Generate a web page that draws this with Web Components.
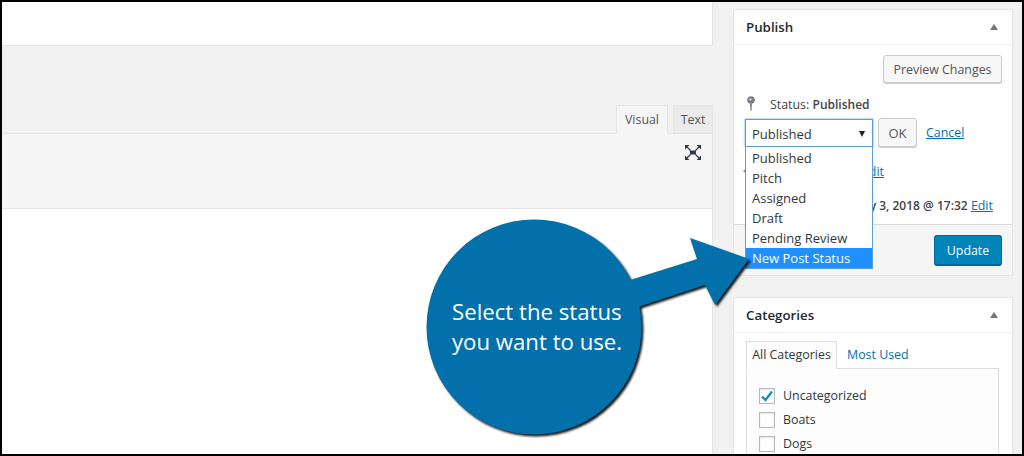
<!DOCTYPE html>
<html lang="en">
<head>
<meta charset="utf-8">
<title>Edit Post</title>
<style>
  html, body { margin: 0; padding: 0; background: #000; }
</style>
</head>
<body>
<wp-page>
  <wp-editor slot="main"></wp-editor>
  <wp-metabox slot="side" heading="Publish">
    <wp-publish></wp-publish>
  </wp-metabox>
  <wp-metabox slot="side" heading="Categories" tall>
    <wp-categories></wp-categories>
  </wp-metabox>
  <wp-callout slot="over">Select the status<br>you want to use.</wp-callout>
</wp-page>

<script>
class WpPage extends HTMLElement {
  connectedCallback() {
    this.attachShadow({ mode: 'open' });
    this.shadowRoot.innerHTML = `
      <style>
        :host {
          display: flex;
          position: relative;
          box-sizing: border-box;
          width: 1024px;
          height: 456px;
          border: 2px solid #000;
          background: #f1f1f1;
          overflow: hidden;
          font: 12.400px/18px "Open Sans", "Noto Sans", sans-serif;
          color: #444;
        }
        .main { width: 711px; flex: none; display: flex; }
        .side {
          margin-left: 20px;
          width: 280px;
          padding-top: 7px;
          display: flex;
          flex-direction: column;
          gap: 21px;
        }
      </style>
      <div class="main"><slot name="main"></slot></div>
      <div class="side"><slot name="side"></slot></div>
      <slot name="over"></slot>
    `;
  }
}
customElements.define('wp-page', WpPage);

class WpEditor extends HTMLElement {
  connectedCallback() {
    this.attachShadow({ mode: 'open' });
    this.shadowRoot.innerHTML = `
      <style>
        :host { display: flex; flex-direction: column; width: 100%; }
        .title {
          height: 43px;
          background: #fff;
          border: 1px solid #e5e5e5;
          border-width: 0 1px 1px 0;
        }
        .tabs {
          margin-top: 59px;
          height: 28px;
          display: flex;
          justify-content: flex-end;
          align-items: flex-end;
          gap: 5px;
          position: relative;
          z-index: 1;
        }
        .tab {
          box-sizing: border-box;
          height: 29px;
          margin-bottom: -1px;
          border: 1px solid #e5e5e5;
          display: flex;
          align-items: center;
          justify-content: center;
          color: #555;
        }
        .tab.on { width: 52px; background: #f5f5f5; border-bottom-color: #f5f5f5; }
        .tab.off { width: 40px; background: #ebebeb; }
        .bar {
          height: 63px;
          background: #f5f5f5;
          border: 1px solid #e5e5e5;
          border-width: 1px 1px 1px 0;
          display: flex;
          justify-content: flex-end;
          align-items: flex-start;
          padding: 11px 11px 0 0;
        }
        .content {
          flex: 1;
          background: #fff;
          border-right: 1px solid #e5e5e5;
        }
        svg { display: block; }
      </style>
      <div class="title"></div>
      <div class="tabs">
        <div class="tab on">Visual</div>
        <div class="tab off">Text</div>
      </div>
      <div class="bar">
        <svg width="16" height="15" viewBox="0 0 16 15" fill="#2f3b4c" stroke="none">
          <rect x="5" y="5.500" width="6" height="4"/>
          <path d="M0 0h4.500L0 4.500zM16 0v4.500L11.500 0zM0 15v-4.500L4.500 15zM16 15h-4.500L16 10.500z"/>
          <path d="M2 2l3.500 3.500M14 2l-3.500 3.500M2 13l3.500-3.500M14 13l-3.500-3.500" stroke="#2f3b4c" stroke-width="1.200"/>
        </svg>
      </div>
      <div class="content"></div>
    `;
  }
}
customElements.define('wp-editor', WpEditor);

class WpMetabox extends HTMLElement {
  connectedCallback() {
    const root = this.attachShadow({ mode: 'open' });
    root.innerHTML = `
      <style>
        :host {
          display: block;
          box-sizing: border-box;
          background: #fff;
          border: 1px solid #e5e5e5;
        }
        :host([tall]) { flex: 1; border-bottom: 0; }
        .head {
          box-sizing: border-box;
          height: 35px;
          padding: 0 14px 0 12px;
          display: flex;
          justify-content: space-between;
          align-items: center;
          border-bottom: 1px solid #eee;
          font-size: 13.300px;
          font-weight: 600;
          color: #23282d;
        }
        .caret {
          width: 0;
          height: 0;
          border: 4px solid transparent;
          border-top: 0;
          border-bottom: 6px solid #72777c;
        }
      </style>
      <div class="head"><span></span><i class="caret"></i></div>
      <slot></slot>
    `;
    root.querySelector('span').textContent = this.getAttribute('heading');
  }
}
customElements.define('wp-metabox', WpMetabox);

class WpStatusSelect extends HTMLElement {
  connectedCallback() {
    this.attachShadow({ mode: 'open' });
    const options = ['Published', 'Pitch', 'Assigned', 'Draft', 'Pending Review', 'New Post Status'];
    this.shadowRoot.innerHTML = `
      <style>
        :host {
          display: block;
          position: relative;
          width: 128px;
          height: 28px;
          margin-top: 1px;
          font-size: 13px;
        }
        .box {
          box-sizing: border-box;
          height: 28px;
          padding: 1px 6px 0;
          background: #fff;
          border: 1px solid #5b9dd9;
          box-shadow: 0 0 2px rgba(30, 140, 190, .8);
          display: flex;
          align-items: center;
          justify-content: space-between;
          color: #32373c;
        }
        .arrow {
          width: 0;
          height: 0;
          margin-right: 1px;
          border: 3.500px solid transparent;
          border-bottom: 0;
          border-top: 6px solid #222;
        }
        ul {
          position: absolute;
          left: 0;
          top: 28px;
          box-sizing: border-box;
          width: 128px;
          margin: 0;
          padding: 1px 0 0;
          list-style: none;
          background: #fff;
          border: 1px solid #5b9dd9;
          border-top: 0;
          z-index: 2;
          color: #32373c;
        }
        li { height: 20px; line-height: 20px; padding: 0 6px; }
        li.sel { background: #1e90ff; color: #fff; }
      </style>
      <div class="box"><span>Published</span><i class="arrow"></i></div>
      <ul>${options.map((o, i) => `<li class="${i === 5 ? 'sel' : ''}">${o}</li>`).join('')}</ul>
    `;
  }
}
customElements.define('wp-status-select', WpStatusSelect);

class WpPublish extends HTMLElement {
  connectedCallback() {
    this.attachShadow({ mode: 'open' });
    this.shadowRoot.innerHTML = `
      <style>
        :host { display: block; }
        .body {
          box-sizing: border-box;
          height: 179px;
          padding: 10px 10px 0 11px;
          display: flex;
          flex-direction: column;
        }
        .btn {
          box-sizing: border-box;
          padding-top: 2px;
          background: #f7f7f7;
          border: 1px solid #ccc;
          border-radius: 3px;
          box-shadow: 0 1px 0 #ccc;
          color: #555;
          display: flex;
          align-items: center;
          justify-content: center;
        }
        .preview { align-self: flex-end; width: 119px; height: 28px; }
        .row { display: flex; align-items: center; height: 18px; }
        .row .ico { width: 25px; flex: none; }
        .row .txt { margin-top: 2px; }
        .status { margin-top: 12px; }
        .choose { display: flex; align-items: flex-start; margin-top: 5px; height: 29px; }
        .ok { width: 39px; height: 29px; margin-left: 5px; padding-top: 0; font-size: 13px; }
        a { color: #0073aa; text-decoration: underline; }
        .cancel { margin: 6px 0 0 9px; }
        b { font-weight: 600; font-size: 12px; }
        .vis { margin-top: 15px; }
        .date { margin-top: 16px; white-space: nowrap; }
        .foot {
          box-sizing: border-box;
          height: 51px;
          background: #f5f5f5;
          border-top: 1px solid #ddd;
          padding: 10px 10px 0 0;
          display: flex;
          justify-content: flex-end;
          align-items: flex-start;
        }
        .update {
          box-sizing: border-box;
          width: 68px;
          height: 31px;
          padding-top: 2px;
          background: #0085ba;
          border: 1px solid #006799;
          border-bottom-width: 2px;
          border-radius: 3px;
          color: #fff;
          display: flex;
          align-items: center;
          justify-content: center;
        }
        svg { display: block; }
      </style>
      <div class="body">
        <div class="btn preview">Preview Changes</div>
        <div class="row status">
          <span class="ico">
            <svg width="12" height="16" viewBox="0 0 12 16">
              <circle cx="6" cy="4" r="3.800" fill="#7b7f85"/>
              <circle cx="5.500" cy="3.500" r="1.100" fill="#e8e8e8"/>
              <path d="M5 7.500h2l-.5 7.500h-1z" fill="#8a7a66"/>
            </svg>
          </span>
          <span class="txt">Status: <b>Published</b></span>
        </div>
        <div class="choose">
          <wp-status-select></wp-status-select>
          <div class="btn ok">OK</div>
          <a class="cancel">Cancel</a>
        </div>
        <div class="row vis">
          <span class="ico">
            <svg width="12" height="10" viewBox="0 0 12 10" style="margin-left:-2px"><path d="M0 5q6-6 12 0q-6 6-12 0z" fill="#82878c"/></svg>
          </span>
          <span class="txt">Visibility: <b>Public</b> <a>Edit</a></span>
        </div>
        <div class="row date">
          <span class="ico"></span>
          <span class="txt">Published on: <b>May 3, 2018 @ 17:32</b> <a>Edit</a></span>
        </div>
      </div>
      <div class="foot"><div class="update">Update</div></div>
    `;
  }
}
customElements.define('wp-publish', WpPublish);

class WpCategories extends HTMLElement {
  connectedCallback() {
    this.attachShadow({ mode: 'open' });
    const items = [['Uncategorized', true], ['Boats', false], ['Dogs', false]];
    this.shadowRoot.innerHTML = `
      <style>
        :host { display: block; padding: 8px 13px 0 12px; }
        .tabs { display: flex; height: 27px; position: relative; z-index: 1; }
        .tab { box-sizing: border-box; height: 27px; display: flex; align-items: center; }
        .all {
          width: 91px;
          justify-content: center;
          background: #fdfdfd;
          border: 1px solid #ddd;
          border-bottom-color: #fdfdfd;
          color: #32373c;
          height: 28px;
        }
        .used { margin-left: 10px; color: #0073aa; }
        .panel {
          box-sizing: border-box;
          height: 90px;
          background: #fdfdfd;
          border: 1px solid #ddd;
          border-bottom: 0;
          padding: 19px 12px 0;
          display: flex;
          flex-direction: column;
          gap: 8px;
        }
        .item { display: flex; align-items: center; height: 16px; gap: 8px; color: #32373c; }
        .item span:last-child { margin-top: -1px; }
        .check {
          box-sizing: border-box;
          width: 16px;
          height: 16px;
          background: #fff;
          border: 1px solid #b4b9be;
          box-shadow: inset 0 1px 2px rgba(0, 0, 0, .1);
          display: block;
          flex: none;
        }
        svg { display: block; margin: 0 0 0 1px; }
      </style>
      <div class="tabs">
        <div class="tab all">All Categories</div>
        <div class="tab used">Most Used</div>
      </div>
      <div class="panel">
        ${items.map(([name, on]) => `
          <div class="item">
            <span class="check">${on ? '<svg width="12" height="14" viewBox="0 0 12 14"><path d="M1 7.500l3.500 3.500L11 2.500" fill="none" stroke="#1e8cbe" stroke-width="2.400"/></svg>' : ''}</span>
            <span>${name}</span>
          </div>`).join('')}
      </div>
    `;
  }
}
customElements.define('wp-categories', WpCategories);

class WpCallout extends HTMLElement {
  connectedCallback() {
    this.attachShadow({ mode: 'open' });
    this.shadowRoot.innerHTML = `
      <style>
        :host {
          position: absolute;
          left: 418px;
          top: 208px;
          width: 340px;
          height: 240px;
          z-index: 5;
        }
        svg {
          position: absolute;
          left: 0;
          top: 0;
          overflow: visible;
          filter: drop-shadow(2px 2px 1.200px #161616);
        }
        .text {
          position: absolute;
          left: 32px;
          top: 87px;
          color: #fff;
          font: 22.200px/30px "Open Sans", "Noto Sans", sans-serif;
          white-space: nowrap;
        }
      </style>
      <svg width="340" height="240" viewBox="420 210 340 240">
        <path fill="#0170ab" d="M630 280L697 259L690 238L749 259L715 305L705 285L638 307z"/>
        <circle cx="534" cy="327" r="107.500" fill="#0170ab"/>
      </svg>
      <div class="text"><slot></slot></div>
    `;
  }
}
customElements.define('wp-callout', WpCallout);
</script>
</body>
</html>
